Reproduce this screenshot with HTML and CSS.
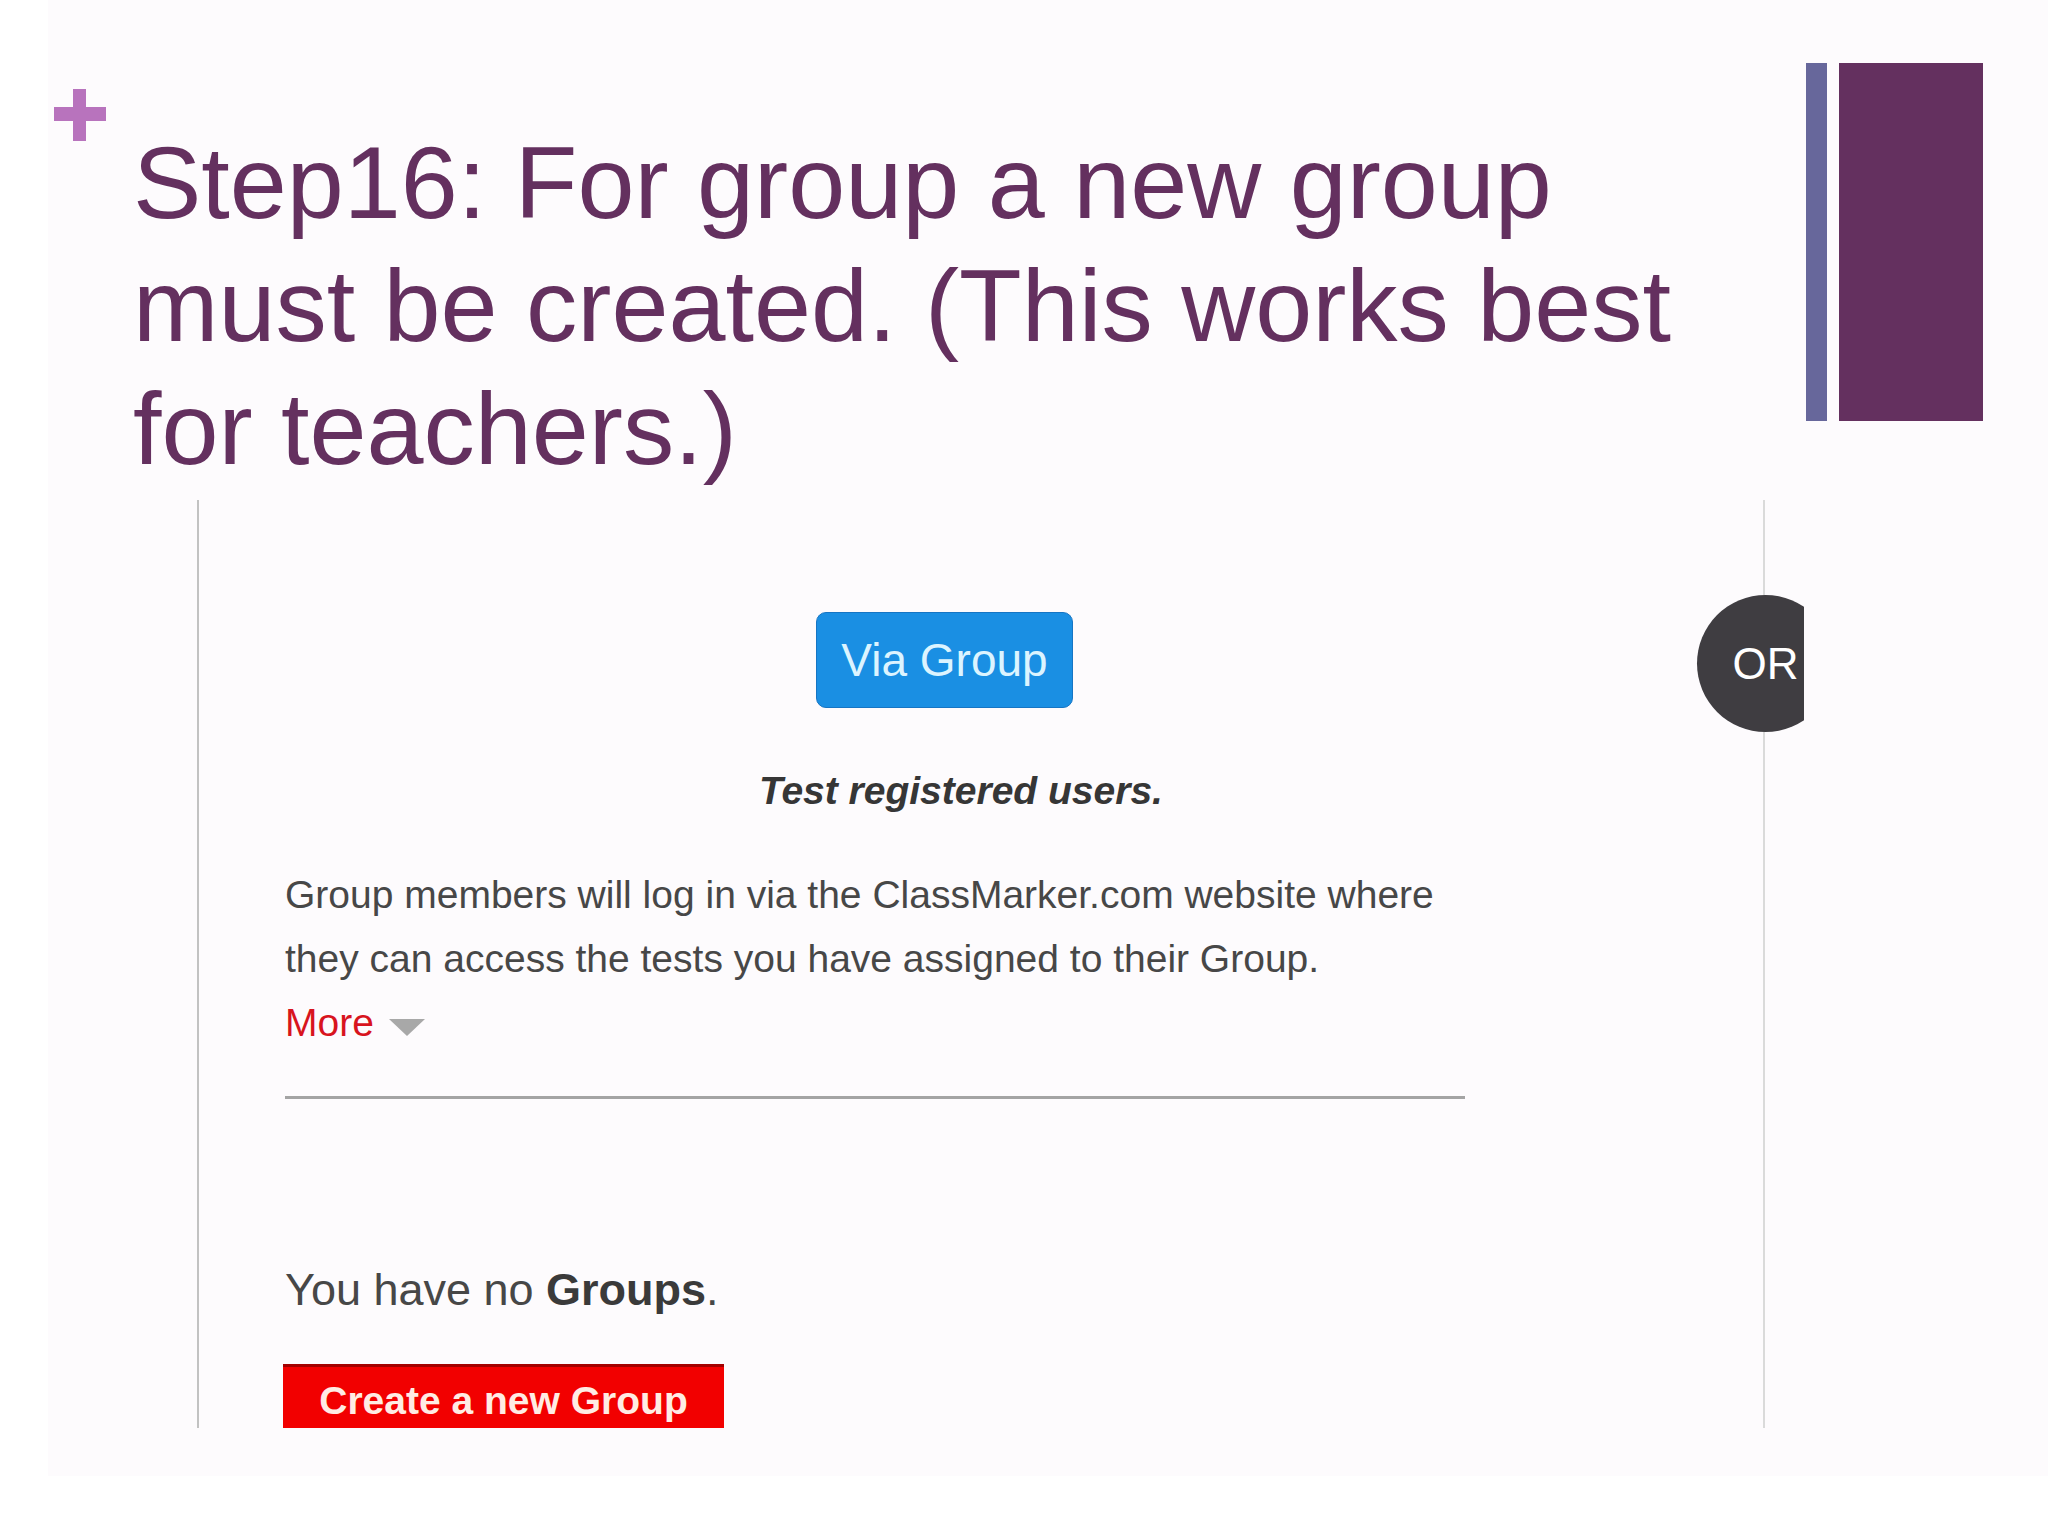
FILE: index.html
```html
<!DOCTYPE html>
<html lang="en">
<head>
    <meta charset="UTF-8">
    <meta name="viewport" content="width=device-width, initial-scale=1.0">
    <title>Step16</title>
    <link rel="stylesheet" href="styles.css">
</head>
<body>
    <div class="slide">
        <header class="slide-header">
            <svg class="plus" viewBox="0 0 52 52">
                <rect x="19" y="0" width="13" height="52"/>
                <rect x="0" y="18" width="52" height="14"/>
            </svg>
            <h1 class="title">Step16: For group a new group must be created. (This works best for teachers.)</h1>
            <div class="bars">
                <div class="bar-thin"></div>
                <div class="bar-thick"></div>
            </div>
        </header>

        <div class="shot">
            <div class="panel">
                <div class="via-group">Via Group</div>
                <div class="subtitle">Test registered users.</div>
                <p class="desc">
                    Group members will log in via the ClassMarker.com website where<br>
                    they can access the tests you have assigned to their Group.<br>
                    <span class="more">More</span>
                    <svg class="caret" viewBox="0 0 36 17"><polygon points="0,0 36,0 18,17"/></svg>
                </p>
                <div class="rule"></div>
                <div class="no-groups">You have no <b>Groups</b>.</div>
                <div class="create-btn">Create a new Group</div>
            </div>
            <div class="or-badge">OR</div>
        </div>
    </div>
</body>
</html>
```

FILE: styles.css
```css
:root {
    --purple: #64305f;
    --slate: #67679b;
    --orchid: #b873bd;
    --text-gray: #474747;
}

* {
    margin: 0;
    padding: 0;
    box-sizing: border-box;
}

body {
    background: #ffffff;
    font-family: "Liberation Sans", Arial, sans-serif;
    width: 2048px;
    height: 1536px;
    overflow: hidden;
}

.slide {
    margin-left: 48px;
    width: 2000px;
    height: 1476px;
    background: #fdfbfd;
}

.slide-header {
    display: flex;
    align-items: flex-start;
    padding: 63px 0 0 6px;
}

.plus {
    width: 52px;
    height: 52px;
    margin-top: 26px;
    fill: var(--orchid);
    flex-shrink: 0;
}

.title {
    width: 1600px;
    margin: 58px 0 0 27px;
    font-size: 102.5px;
    line-height: 123px;
    font-weight: normal;
    color: var(--purple);
    flex-shrink: 0;
}

.bars {
    display: flex;
    gap: 12px;
    margin-left: 73px;
    height: 358px;
}

.bar-thin {
    width: 21px;
    background: var(--slate);
}

.bar-thick {
    width: 144px;
    background: var(--purple);
}

.shot {
    position: relative;
    margin: 10px 0 0 149px;
    width: 1607px;
    height: 928px;
    overflow: hidden;
}

.panel {
    width: 1568px;
    height: 100%;
    border-left: 2px solid #c2c2c2;
    border-right: 2px solid #dadada;
    padding: 112px 0 0 86px;
    color: var(--text-gray);
}

.via-group {
    width: 257px;
    height: 96px;
    margin-left: 531px;
    background: #1a8fe3;
    border: 1px solid #1675c4;
    border-radius: 10px;
    color: #dcf4ff;
    font-size: 46px;
    line-height: 94px;
    text-align: center;
}

.subtitle {
    margin: 60px 0 0 474px;
    font-size: 39px;
    line-height: 46px;
    font-weight: bold;
    font-style: italic;
    color: #363636;
}

.desc {
    margin-top: 49px;
    font-size: 39px;
    line-height: 64px;
}

.more {
    color: #d8141e;
}

.caret {
    width: 36px;
    height: 17px;
    margin-left: 4px;
    fill: #a8a8a8;
}

.rule {
    width: 1180px;
    height: 3px;
    margin-top: 41px;
    background: #a4a4a4;
}

.no-groups {
    margin-top: 165px;
    font-size: 45px;
    line-height: 52px;
}

.no-groups b {
    color: #3a3a3a;
}

.create-btn {
    width: 441px;
    height: 80px;
    margin: 48px 0 0 -2px;
    padding-top: 11px;
    background: #f20000;
    border-top: 3px solid #a30000;
    color: #ffece4;
    font-size: 39px;
    line-height: 46px;
    font-weight: bold;
    text-align: center;
}

.or-badge {
    position: absolute;
    left: 1500px;
    top: 95px;
    width: 137px;
    height: 137px;
    border-radius: 50%;
    background: #3f3d41;
    color: #ffffff;
    font-size: 44px;
    line-height: 137px;
    text-align: center;
}
```
